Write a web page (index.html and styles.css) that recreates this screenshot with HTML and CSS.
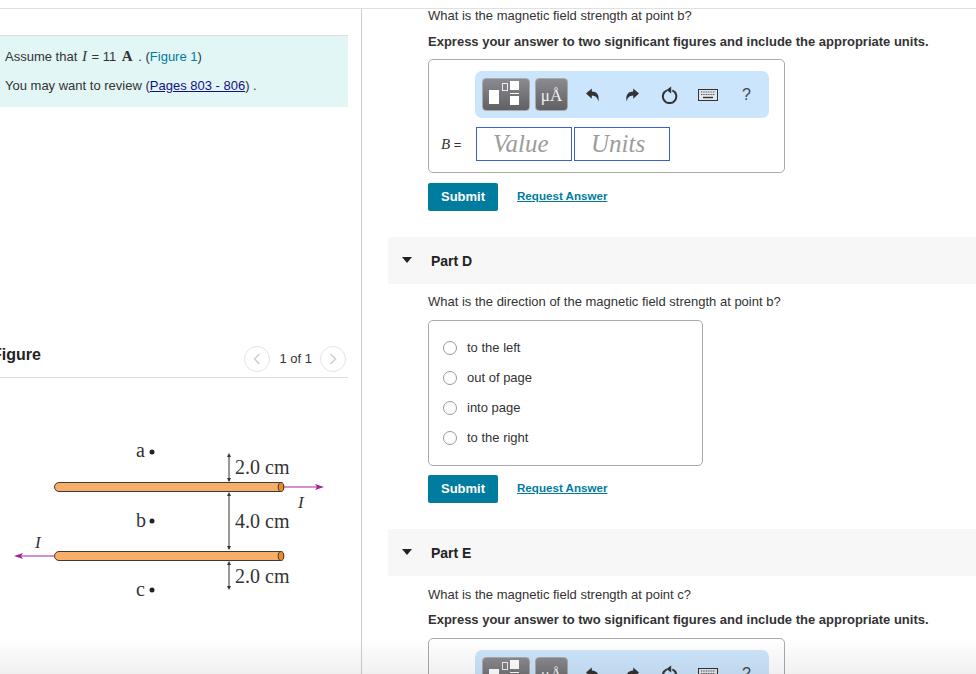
FILE: index.html
```html
<!DOCTYPE html>
<html lang="en">
<head>
<meta charset="utf-8">
<title>Magnetic field between two wires</title>
<link rel="stylesheet" href="styles.css">
</head>
<body>
<svg width="0" height="0" class="defs">
  <defs>
    <symbol id="tb-undo" viewBox="0 0 16 16"><path d="M1 6.500 6.800 1.500V4.500C11.500 4.600 14.800 7.500 13.300 14.500 12.600 11 10.800 8.700 6.800 8.600V11.800Z"/></symbol>
    <symbol id="tb-redo" viewBox="0 0 16 16"><path d="M15 6.500 9.200 1.500V4.500C4.500 4.600 1.200 7.500 2.700 14.500 3.400 11 5.200 8.700 9.200 8.600V11.800Z"/></symbol>
    <symbol id="tb-reset" viewBox="0 0 18 18"><path d="M6.800 4.300A6.700 6.700 0 1 0 12.400 4.300" fill="none" stroke="currentColor" stroke-width="2"/><path d="M11.200 0.500V7.500L6.400 4Z"/></symbol>
    <symbol id="tb-keys" viewBox="0 0 20 12"><rect x=".5" y=".5" width="19" height="11" fill="#dfe6ec" stroke="#333"/><path d="M3 3h14M3 5.500h14" stroke="#555" stroke-width="1.200" stroke-dasharray="1 .7"/><path d="M5 8.500h10" stroke="#333" stroke-width="1.400"/></symbol>
  </defs>
</svg>
<div class="page">
  <aside class="left">
    <div class="intro">
      <p class="intro-line">Assume that <i class="math">I</i> = 11 <b class="unit">A</b> . (<a class="fig-link">Figure 1</a>)</p>
      <p class="intro-line">You may want to review (<a class="page-link">Pages 803 - 806</a>) .</p>
    </div>
    <div class="fig-head">
      <h2 class="fig-title">Figure</h2>
      <div class="pager">
        <span class="pager-btn"><svg width="8" height="12" viewBox="0 0 8 12"><path d="M6.500 1 1.500 6l5 5" fill="none" stroke="#ccc" stroke-width="1.300"/></svg></span>
        <span class="pager-text">1 of 1</span>
        <span class="pager-btn"><svg width="8" height="12" viewBox="0 0 8 12"><path d="M1.500 1l5 5-5 5" fill="none" stroke="#ccc" stroke-width="1.300"/></svg></span>
      </div>
    </div>
    <svg class="diagram" width="340" height="170" viewBox="0 0 340 170">
      <g class="pink">
        <path d="M284 47H318M54 116H20"/>
        <path class="pink-head" d="M324 47 315 44 317 47 315 50ZM14 116 23 113 21 116 23 119Z"/>
      </g>
      <rect class="wire" x="54.500" y="42.500" width="229" height="9" rx="4.500"/>
      <ellipse class="wire-end" cx="281" cy="47" rx="2.800" ry="4.500"/>
      <rect class="wire" x="54.500" y="111.500" width="229" height="9" rx="4.500"/>
      <ellipse class="wire-end" cx="281" cy="116" rx="2.800" ry="4.500"/>
      <g class="dim">
        <path d="M229 15V41M229 54V109M229 123V148"/>
        <path class="dim-head" d="M229 13 227 17H231ZM229 42 227 38H231ZM229 52 227 56H231ZM229 110 227 106H231ZM229 121 227 125H231ZM229 150 227 146H231Z"/>
      </g>
      <circle class="dot" cx="152" cy="12" r="2.500"/>
      <circle class="dot" cx="152" cy="81" r="2.500"/>
      <circle class="dot" cx="152" cy="150" r="2.500"/>
      <text class="lbl" x="136" y="17">a</text>
      <text class="lbl" x="136" y="87">b</text>
      <text class="lbl" x="136" y="156">c</text>
      <text class="lbl" x="235" y="34">2.0 cm</text>
      <text class="lbl" x="235" y="88">4.0 cm</text>
      <text class="lbl" x="235" y="143">2.0 cm</text>
      <text class="lbl cur" x="298" y="68">I</text>
      <text class="lbl cur" x="35" y="108">I</text>
    </svg>
  </aside>
  <main class="right">
    <section class="part-body first">
      <p class="q lead">What is the magnetic field strength at point b?</p>
      <p class="q strong">Express your answer to two significant figures and include the appropriate units.</p>
      <div class="answer">
        <div class="toolbar">
          <span class="tb-btn tb-tpl"><span class="big-sq"></span><span class="small-sq"></span><span class="frac"><span class="frac-n"></span><span class="frac-d"></span></span></span>
          <span class="tb-btn tb-unit">μÅ</span>
          <svg class="tb-ic undo"><use href="#tb-undo"/></svg>
          <svg class="tb-ic redo"><use href="#tb-redo"/></svg>
          <svg class="tb-ic reset"><use href="#tb-reset"/></svg>
          <svg class="tb-ic keys"><use href="#tb-keys"/></svg>
          <span class="tb-help">?</span>
        </div>
        <div class="inputs">
          <span class="var"><i class="math">B</i> =</span>
          <span class="field">Value</span>
          <span class="field">Units</span>
        </div>
      </div>
      <div class="actions"><span class="submit">Submit</span><a class="request">Request Answer</a></div>
    </section>
    <header class="part-head"><span class="caret"></span><h3 class="part-title">Part D</h3></header>
    <section class="part-body second">
      <p class="q q-top">What is the direction of the magnetic field strength at point b?</p>
      <div class="choices">
        <label class="choice"><span class="radio"></span>to the left</label>
        <label class="choice"><span class="radio"></span>out of page</label>
        <label class="choice"><span class="radio"></span>into page</label>
        <label class="choice"><span class="radio"></span>to the right</label>
      </div>
      <div class="actions tight"><span class="submit">Submit</span><a class="request">Request Answer</a></div>
    </section>
    <header class="part-head"><span class="caret"></span><h3 class="part-title">Part E</h3></header>
    <section class="part-body third">
      <p class="q q-top">What is the magnetic field strength at point c?</p>
      <p class="q strong">Express your answer to two significant figures and include the appropriate units.</p>
      <div class="answer">
        <div class="toolbar">
          <span class="tb-btn tb-tpl"><span class="big-sq"></span><span class="small-sq"></span><span class="frac"><span class="frac-n"></span><span class="frac-d"></span></span></span>
          <span class="tb-btn tb-unit">μÅ</span>
          <svg class="tb-ic undo"><use href="#tb-undo"/></svg>
          <svg class="tb-ic redo"><use href="#tb-redo"/></svg>
          <svg class="tb-ic reset"><use href="#tb-reset"/></svg>
          <svg class="tb-ic keys"><use href="#tb-keys"/></svg>
          <span class="tb-help">?</span>
        </div>
      </div>
    </section>
  </main>
  <div class="fade"></div>
</div>
</body>
</html>
```
FILE: styles.css
```css
* { box-sizing: border-box; }
html, body { margin: 0; height: 100%; overflow: hidden; background: #fff; }
body { font-family: "Liberation Sans", Arial, sans-serif; font-size: 13px; color: #333; }
.defs { position: absolute; }
p, h2, h3 { margin: 0; }

.page { display: flex; height: 666px; margin-top: 8px; border-top: 1px solid #e0e0e0; overflow: hidden; position: relative; }
.left { width: 362px; flex: none; padding-right: 13px; border-right: 1px solid #c5cdd8; }
.right { flex: 1; min-width: 0; padding-left: 26px; }

.intro { margin-top: 26px; height: 72px; background: #e2f6f6; border-top: 1px solid #ddd; padding: 11px 5px 0; }
.intro-line { height: 29px; line-height: 18px; }
.intro-line + .intro-line { margin-top: 1px; }
.math { font-family: "Liberation Serif", serif; font-style: italic; font-size: 15px; }
.intro .math { margin: 0 1px; }
.unit { font-family: "Liberation Serif", serif; font-size: 15px; font-weight: 700; margin: 0 2px; }
.fig-link { color: #007c9e; }
.page-link { color: #10108a; text-decoration: underline; }

.fig-head { display: flex; align-items: center; justify-content: space-between; height: 37px; margin-top: 234px; border-bottom: 1px solid #ddd; padding: 0 2px 0 0; }
.fig-title { font-size: 16px; font-weight: 700; color: #222; margin-left: -8px; margin-top: -8px; }
.pager { display: flex; align-items: center; gap: 9px; margin-top: -1px; }
.pager-btn { width: 26px; height: 26px; border: 1px solid #e4e4e4; border-radius: 50%; display: flex; align-items: center; justify-content: center; }
.pager-text { font-size: 13px; color: #333; margin-right: -1px; }

.diagram { display: block; margin-top: 62px; }
.wire { fill: #f6ae68; stroke: #3a3a3a; stroke-width: 1; }
.wire-end { fill: #ef8b20; stroke: #3a3a3a; stroke-width: 1; }
.pink { stroke: #a3249c; stroke-width: 1.200; fill: none; }
.pink-head { fill: #a3249c; stroke: none; }
.dim { stroke: #333; stroke-width: 1; fill: none; }
.dim-head { fill: #333; stroke: none; }
.dot { fill: #222; }
.lbl { font-family: "Liberation Serif", serif; font-size: 20px; fill: #333; }
.cur { font-style: italic; font-size: 17px; }

.part-body { padding-left: 40px; }
.part-body.first { height: 228px; }
.part-body.second { height: 245px; }
.q { line-height: 16px; }
.q.lead { line-height: 14px; }
.lead + .strong { margin-top: 11px; }
.q-top { padding-top: 10px; line-height: 16px; box-sizing: content-box; }
.third .q-top { padding-top: 11px; }
.strong { font-weight: 700; margin-top: 9px; }

.answer { width: 357px; height: 114px; margin-top: 9px; border: 1px solid #aaa; border-radius: 5px; padding: 11px 15px 0 46px; }
.third .answer { margin-top: 10px; }
.toolbar { height: 47px; background: #cbe5fc; border-radius: 7px; display: flex; align-items: center; padding-left: 7px; }
.tb-btn { height: 33px; border-radius: 4px; background: linear-gradient(#8a8a90, #616164); border: 1px solid #aaa; display: block; position: relative; flex: none; }
.tb-tpl { width: 48px; }
.big-sq { position: absolute; left: 6px; top: 11px; width: 10px; height: 14px; background: #fff; }
.small-sq { position: absolute; left: 19px; top: 4px; width: 6px; height: 8px; border: 1px solid #eee; }
.frac { position: absolute; left: 27px; top: 2px; width: 9px; }
.frac-n, .frac-d { display: block; width: 100%; background: #fff; }
.frac-n { height: 9px; margin-bottom: 6px; }
.frac-d { height: 9px; }
.frac::after { content: ""; position: absolute; left: 0; right: 0; top: 12px; height: 1px; background: #fff; }
.tb-unit { width: 33px; margin-left: 5px; font-family: "Liberation Serif", serif; font-size: 17px; line-height: 34px; text-align: center; color: #f2f2f2; }
.tb-ic { height: 16px; width: 16px; fill: #333; color: #333; flex: none; }
.undo { margin-left: 17px; }
.redo { margin-left: 23px; }
.reset { margin-left: 20px; width: 18px; height: 18px; }
.keys { margin-left: 20px; width: 20px; height: 12px; }
.tb-help { margin-left: 24px; font-size: 16px; color: #444; }

.inputs { display: flex; align-items: center; height: 34px; margin: 9px 0 0 -35px; }
.var { width: 36px; padding-left: 1px; white-space: nowrap; }
.var .math { font-size: 15px; }
.field { width: 96px; height: 34px; margin-right: 2px; border: 1px solid #3a62cf; font-family: "Liberation Serif", serif; font-style: italic; font-size: 25px; line-height: 32px; padding-left: 16px; color: #9c9c9c; }

.actions { display: flex; align-items: center; gap: 19px; margin-top: 10px; }
.actions.tight { margin-top: 9px; }
.submit { width: 70px; height: 28px; line-height: 28px; text-align: center; background: #007c9e; color: #fff; font-size: 13px; font-weight: 700; border-radius: 2px; }
.request { color: #007c9e; font-size: 11.600px; font-weight: 700; text-decoration: underline; margin-top: -3px; }

.part-head { height: 47px; display: flex; align-items: center; background: #f7f7f7; padding-left: 14px; }
.caret { width: 0; height: 0; margin-top: -1px; border-left: 5.500px solid transparent; border-right: 5.500px solid transparent; border-top: 6px solid #222; }
.part-title { margin-left: 19px; font-size: 14px; font-weight: 700; color: #222; }

.choices { width: 275px; height: 146px; margin-top: 10px; border: 1px solid #aaa; border-radius: 5px; padding-top: 12px; }
.choice { display: flex; align-items: center; height: 30px; padding: 0 0 2px 14px; }
.radio { width: 14px; height: 14px; margin: 2px 10px 0 0; border: 1px solid #999; border-radius: 50%; background: #fff; flex: none; }

.fade { position: absolute; left: 0; right: 0; bottom: 0; height: 36px; background: linear-gradient(rgba(0,0,0,0), rgba(0,0,0,.06)); pointer-events: none; }
```
